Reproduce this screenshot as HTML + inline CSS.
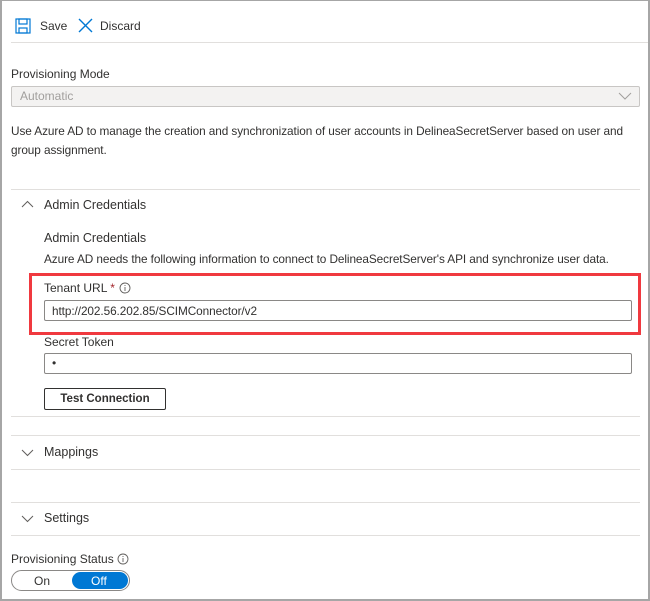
<!DOCTYPE html>
<html><head><meta charset="utf-8"><style>
*{margin:0;padding:0;box-sizing:border-box}
body{width:650px;height:601px;background:#fff;font-family:"Liberation Sans",sans-serif;font-size:12px;color:#323130;position:relative;overflow:hidden}
.frame{position:absolute;left:0;top:0;width:650px;height:601px;border:2px solid #a6a6a6;border-top:1px solid #a6a6a6}
.a{position:absolute;white-space:nowrap}
.hr{position:absolute;height:1px;background:#e1dfdd}
.inp{position:absolute;border:1px solid #8a8886;border-radius:2px;background:#fff}
.s{font-size:11.8px;letter-spacing:-0.08px}
</style></head><body>
<div class="frame"></div>
<svg class="a" style="left:15px;top:18px" width="16" height="16" viewBox="0 0 16 16" fill="none" stroke="#0078d4" stroke-width="1.2"><rect x="1" y="1" width="14" height="14"/><rect x="4" y="1" width="8" height="5"/><rect x="4" y="10" width="8" height="5"/></svg>
<div class="a" style="left:40px;top:19px">Save</div>
<svg class="a" style="left:77px;top:17px" width="17" height="17" viewBox="0 0 17 17" stroke="#0078d4" stroke-width="1.4"><path d="M2 2L15 15M15 2L2 15"/></svg>
<div class="a" style="left:100px;top:19px">Discard</div>
<div class="hr" style="left:11px;top:42px;width:637px"></div>
<div class="a" style="left:11px;top:67px">Provisioning Mode</div>
<div class="a" style="left:11px;top:86px;width:629px;height:21px;background:#f3f2f1;border:1px solid #c8c6c4;border-radius:2px"></div>
<div class="a" style="left:20px;top:89px;color:#a19f9d">Automatic</div>
<svg class="a" style="left:618px;top:91px" width="14" height="10" viewBox="0 0 14 10" fill="none" stroke="#a19f9d" stroke-width="1"><path d="M1 2L7 8L13 2"/></svg>
<div class="a s" style="left:11px;top:124px">Use Azure AD to manage the creation and synchronization of user accounts in DelineaSecretServer based on user and</div>
<div class="a s" style="left:11px;top:143px">group assignment.</div>
<div class="hr" style="left:11px;top:189px;width:629px"></div>
<svg class="a" style="left:21px;top:200px" width="13" height="9" viewBox="0 0 13 9" fill="none" stroke="#605e5c" stroke-width="1"><path d="M1 7L6.5 1.5L12 7"/></svg>
<div class="a" style="left:44px;top:198px;font-size:12.5px">Admin Credentials</div>
<div class="a" style="left:44px;top:231px;font-size:12.5px">Admin Credentials</div>
<div class="a s" style="left:44px;top:252px">Azure AD needs the following information to connect to DelineaSecretServer's API and synchronize user data.</div>
<div class="a" style="left:29px;top:273px;width:612px;height:62px;border:3px solid #f0393f"></div>
<div class="a" style="left:44px;top:281px">Tenant URL <span style="color:#a4262c">*</span></div>
<svg class="a" style="left:119px;top:282px" width="12" height="12" viewBox="0 0 12 12" fill="none" stroke="#605e5c" stroke-width="0.9"><circle cx="6" cy="6" r="5"/><path d="M6 5v4M6 3v1"/></svg>
<div class="inp" style="left:44px;top:300px;width:588px;height:21px"></div>
<div class="a s" style="left:52px;top:304px">http://202.56.202.85/SCIMConnector/v2</div>
<div class="a" style="left:44px;top:335px">Secret Token</div>
<div class="inp" style="left:44px;top:353px;width:588px;height:21px"></div>
<div class="a" style="left:52px;top:356px">•</div>
<div class="a" style="left:44px;top:388px;width:122px;height:22px;border:1px solid #323130;border-radius:2px;text-align:center;line-height:20px;font-weight:bold;font-size:11.5px">Test Connection</div>
<div class="hr" style="left:11px;top:416px;width:629px"></div>
<div class="hr" style="left:11px;top:435px;width:629px"></div>
<svg class="a" style="left:21px;top:448px" width="13" height="9" viewBox="0 0 13 9" fill="none" stroke="#605e5c" stroke-width="1"><path d="M1 2L6.5 7.5L12 2"/></svg>
<div class="a" style="left:44px;top:445px;font-size:12.5px">Mappings</div>
<div class="hr" style="left:11px;top:469px;width:629px"></div>
<div class="hr" style="left:11px;top:502px;width:629px"></div>
<svg class="a" style="left:21px;top:514px" width="13" height="9" viewBox="0 0 13 9" fill="none" stroke="#605e5c" stroke-width="1"><path d="M1 2L6.5 7.5L12 2"/></svg>
<div class="a" style="left:44px;top:511px;font-size:12.5px">Settings</div>
<div class="hr" style="left:11px;top:535px;width:629px"></div>
<div class="a" style="left:11px;top:552px">Provisioning Status</div>
<svg class="a" style="left:117px;top:553px" width="12" height="12" viewBox="0 0 12 12" fill="none" stroke="#605e5c" stroke-width="0.9"><circle cx="6" cy="6" r="5"/><path d="M6 5v4M6 3v1"/></svg>
<div class="a" style="left:11px;top:570px;width:119px;height:21px;border:1px solid #8a8886;border-radius:11px"></div>
<div class="a" style="left:72px;top:572px;width:56px;height:17px;background:#0078d4;border-radius:9px"></div>
<div class="a" style="left:34px;top:574px">On</div>
<div class="a" style="left:91px;top:574px;color:#fff">Off</div>
</body></html>
